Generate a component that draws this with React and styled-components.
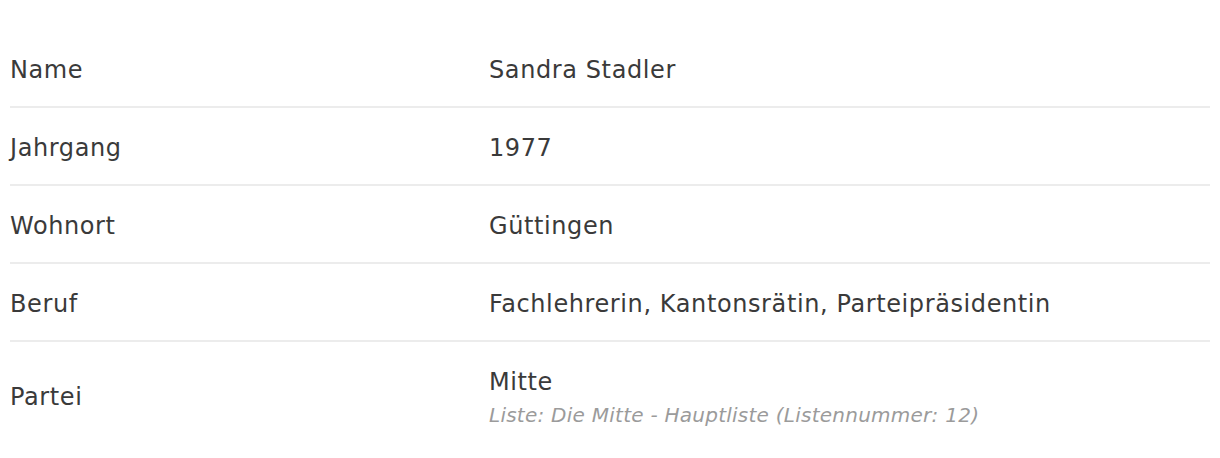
import React from "react";
import styled, { createGlobalStyle } from "styled-components";

const GlobalStyle = createGlobalStyle`
  html, body {
    margin: 0;
    padding: 0;
    background: #ffffff;
  }
  body {
    font-family: "DejaVu Sans", "Noto Sans", sans-serif;
    color: #333333;
  }
`;

const rows = [
  { label: "Name", value: "Sandra Stadler" },
  { label: "Jahrgang", value: "1977" },
  { label: "Wohnort", value: "Güttingen" },
  { label: "Beruf", value: "Fachlehrerin, Kantonsrätin, Parteipräsidentin" },
  {
    label: "Partei",
    value: "Mitte",
    note: "Liste: Die Mitte - Hauptliste (Listennummer: 12)",
  },
];

const App = () => {
  return (
    <>
      <GlobalStyle />
      <Container>
        {rows.map((row, i) => (
          <Row key={row.label} $last={i === rows.length - 1}>
            <Label>{row.label}</Label>
            <Value>
              <span>{row.value}</span>
              {row.note && <Note>{row.note}</Note>}
            </Value>
          </Row>
        ))}
      </Container>
    </>
  );
};

export default App;

const Container = styled.div`
  margin: 0 10px;
  padding-top: 30px;
  display: flex;
  flex-direction: column;
`;

const Row = styled.div`
  display: grid;
  grid-template-columns: 479px 1fr;
  align-items: center;
  padding: 22px 0 18px;
  border-bottom: ${({ $last }) => ($last ? "none" : "2px solid #ececec")};
`;

const Label = styled.div`
  font-size: 24px;
  line-height: 36px;
  letter-spacing: 0.6px;
  color: #3a3a3a;
`;

const Value = styled.div`
  display: flex;
  flex-direction: column;
  font-size: 24px;
  line-height: 36px;
  letter-spacing: 0.6px;
  color: #3a3a3a;
`;

const Note = styled.span`
  font-size: 20px;
  line-height: 30px;
  letter-spacing: 0.25px;
  font-style: italic;
  color: #9b9b9b;
`;
